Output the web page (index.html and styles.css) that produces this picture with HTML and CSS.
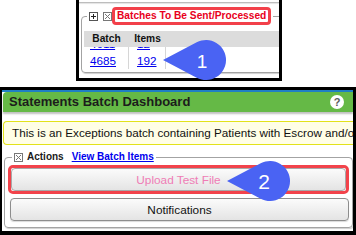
FILE: index.html
```html
<!DOCTYPE html>
<html>
<head>
<meta charset="utf-8">
<link rel="stylesheet" href="styles.css">
</head>
<body>
<div class="page">
  <div class="shot-top">
    <div class="topline"></div>
    <fieldset class="batches">
      <legend class="batches-legend">
        <svg class="tbox" width="9" height="9" viewBox="0 0 9 9"><rect x="0.5" y="0.5" width="8" height="8" fill="#fff" stroke="#555"/><path d="M2 4.5H7M4.5 2V7" stroke="#222" stroke-width="1"/></svg>
        <svg class="tbox xbox" width="9" height="9" viewBox="0 0 9 9"><rect x="0.5" y="0.5" width="8" height="8" fill="#fff" stroke="#777"/><path d="M2 2L7 7M7 2L2 7" stroke="#777" stroke-width="1"/></svg>
        <span class="hl-title">Batches To Be Sent/Processed</span>
      </legend>
      <div class="grid-head">
        <div class="hc">Batch</div>
        <div class="hc">Items</div>
        <div class="hc"></div>
      </div>
      <div class="grid-body">
        <div class="row row-clipped">
          <div class="bc c1"><a href="#">4611</a></div>
          <div class="bc c2"><a href="#">12</a></div>
          <div class="bc c3"></div>
        </div>
        <div class="row">
          <div class="bc c1"><a href="#">4685</a></div>
          <div class="bc c2"><a href="#">192</a></div>
          <div class="bc c3"></div>
        </div>
      </div>
    </fieldset>
  </div>

  <div class="shot-bottom">
    <div class="blue-bar"></div>
    <div class="panel-head">
      <span class="panel-title">Statements Batch Dashboard</span>
      <span class="help">?</span>
    </div>
    <div class="notice">This is an Exceptions batch containing Patients with Escrow and/or Lockbox payments.</div>
    <fieldset class="actions">
      <legend class="actions-legend">
        <svg class="tbox" width="9" height="9" viewBox="0 0 9 9"><rect x="0.5" y="0.5" width="8" height="8" fill="#fff" stroke="#777"/><path d="M2 2L7 7M7 2L2 7" stroke="#777" stroke-width="1"/></svg>
        <span class="legend-label">Actions</span>
        <a class="legend-link" href="#">View Batch Items</a>
      </legend>
      <div class="hl-btn"><button class="btn btn-upload">Upload Test File</button></div>
      <button class="btn btn-notify">Notifications</button>
    </fieldset>
  </div>

  <svg class="callout callout-1" width="64" height="42" viewBox="0 0 64 42">
    <path d="M0 21 L33.7 3.3 A20 20 0 1 1 33.7 38.7 Z" fill="#4a63f3"/>
    <text x="39" y="28.5" class="callout-num one">1</text>
  </svg>
  <svg class="callout callout-2" width="64" height="42" viewBox="0 0 64 42">
    <path d="M0 21 L33.7 3.3 A20 20 0 1 1 33.7 38.7 Z" fill="#4a63f3"/>
    <text x="37" y="28.5" class="callout-num two">2</text>
  </svg>
</div>
</body>
</html>
```

FILE: styles.css
```css
html, body {
  margin: 0;
  padding: 0;
}
body {
  width: 356px;
  height: 235px;
  overflow: hidden;
  background: #fff;
  font-family: "Liberation Sans", Arial, sans-serif;
}
.page {
  position: relative;
  width: 356px;
  height: 235px;
  overflow: hidden;
}

/* ---------- top screenshot ---------- */
.shot-top {
  margin-left: 76px;
  width: 200px;
  height: 78px;
  border: 3px solid #000;
  border-top: 0;
  overflow: hidden;
  background: #fff;
}
.topline {
  height: 2px;
  border-bottom: 1px solid #bdbdbd;
  box-shadow: 0 1px 1px #e4e4e4;
}
.batches {
  margin: 4px 0 0 2px;
  width: 260px;
  min-width: 0;
  box-sizing: border-box;
  border: 1px solid #a3a3a3;
  border-radius: 4px;
  padding: 6px 0 0 2px;
  box-shadow: 1px 1px 1px #cfcfcf;
}
.batches-legend {
  display: flex;
  align-items: center;
  margin-left: 3px;
  padding: 0 2px;
  height: 18px;
}
.tbox {
  display: block;
  flex: none;
}
.xbox {
  margin-left: 5px;
}
.hl-title {
  display: block;
  border: 3px solid #f2404a;
  border-radius: 4px;
  padding: 0 2px;
  line-height: 12px;
  font-size: 10.2px;
  font-weight: bold;
  color: #e8001c;
  white-space: nowrap;
}
.grid-head, .row {
  display: grid;
  grid-template-columns: 45px 37px 1fr;
}
.grid-head {
  height: 16px;
  background: #dcdcdc;
}
.hc {
  line-height: 16px;
  font-size: 10.2px;
  font-weight: bold;
  color: #111;
  text-align: center;
}
.grid-body {
  height: 25px;
  overflow: hidden;
}
.row {
  height: 17px;
}
.row-clipped {
  margin-top: -12px;
}
.bc {
  line-height: 17px;
  font-size: 11.7px;
  white-space: nowrap;
}
.bc a {
  color: #0000ee;
  text-decoration: underline;
}
.c1 {
  padding-left: 6px;
  border-right: 1px solid #d6d6d6;
}
.c2 {
  padding-left: 8px;
  border-right: 1px solid #d6d6d6;
}

/* ---------- bottom screenshot ---------- */
.shot-bottom {
  margin-top: 6px;
  height: 141px;
  border-style: solid;
  border-color: #000;
  border-width: 3px 3px 4px 2px;
  overflow: hidden;
  background: #fff;
}
.blue-bar {
  height: 2px;
  background: #1f7fc4;
}
.panel-head {
  margin-left: 1px;
  height: 20px;
  display: flex;
  align-items: center;
  justify-content: space-between;
  padding: 0 9px 0 6px;
  background: #65b946;
  border-top-left-radius: 4px;
  box-shadow: 0 2px 2px rgba(0, 0, 0, 0.25);
}
.panel-title {
  line-height: 20px;
  font-size: 13px;
  font-weight: bold;
  color: #1c1c1c;
  white-space: nowrap;
}
.help {
  width: 14px;
  height: 14px;
  border-radius: 50%;
  background: #fff;
  color: #5c5c5c;
  font-size: 11px;
  font-weight: bold;
  line-height: 14px;
  text-align: center;
}
.notice {
  margin: 9px 0 0 1px;
  height: 22px;
  border: 1px solid #e2e21a;
  border-right: 0;
  border-radius: 4px 0 0 4px;
  background: #fffee6;
  padding-left: 8px;
  font-size: 11.7px;
  line-height: 22px;
  color: #111;
  white-space: nowrap;
  overflow: hidden;
}
.actions {
  margin: 6px 0 0 2px;
  min-width: 0;
  box-sizing: border-box;
  border: 1px solid #a3a3a3;
  border-radius: 4px;
  padding: 2px 3px 6px 3px;
  box-shadow: 1px 1px 1px #cfcfcf;
}
.actions-legend {
  display: flex;
  align-items: center;
  margin-left: 4px;
  padding: 0 2px;
  height: 12px;
  font-size: 10px;
  font-weight: bold;
  line-height: 12px;
}
.legend-label {
  margin-left: 4px;
  color: #1a1a1a;
}
.legend-link {
  margin-left: 8px;
  color: #0000ee;
  text-decoration: underline;
}
.hl-btn {
  border: 3px solid #f2434b;
  border-radius: 5px;
}
.btn {
  display: block;
  box-sizing: border-box;
  width: 100%;
  height: 23px;
  margin: 0;
  padding: 0;
  border: 1px solid #8d8d8d;
  border-radius: 4px;
  background: linear-gradient(#fbfbfb, #e4e4e4);
  font-family: "Liberation Sans", Arial, sans-serif;
  font-size: 11.8px;
  color: #111;
}
.btn-upload {
  color: #ef7cb5;
  border-color: #a8a8a8;
}
.btn-notify {
  margin: 4px 0 0 2px;
  width: calc(100% - 2px);
  box-shadow: 0 1px 1px rgba(0, 0, 0, 0.15);
}

/* ---------- callouts ---------- */
.callout {
  position: absolute;
  display: block;
}
.callout-1 {
  left: 163px;
  top: 39px;
}
.callout-2 {
  left: 227px;
  top: 160px;
}
.callout-num {
  fill: #fff;
  font-family: "Liberation Sans", Arial, sans-serif;
  text-anchor: middle;
}
.one {
  font-size: 19px;
}
.two {
  font-size: 21px;
}
```
